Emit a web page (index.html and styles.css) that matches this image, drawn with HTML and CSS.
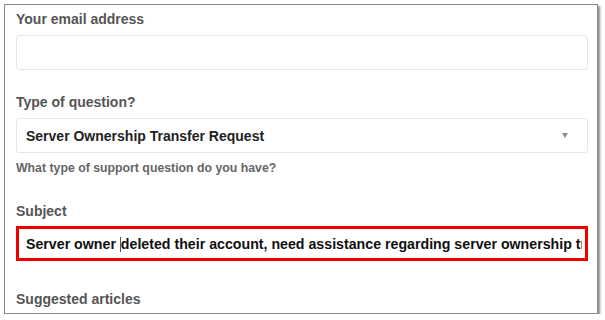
FILE: index.html
```html
<!DOCTYPE html>
<html>
<head>
<meta charset="utf-8">
<link rel="stylesheet" href="styles.css">
</head>
<body>
<div class="frame">
  <div class="field">
    <div class="label">Your email address</div>
    <div class="input"></div>
  </div>
  <div class="field field-hinted">
    <div class="label">Type of question?</div>
    <div class="input select">
      <span class="value">Server Ownership Transfer Request</span>
      <span class="arrow"></span>
    </div>
    <div class="hint">What type of support question do you have?</div>
  </div>
  <div class="field field-subject">
    <div class="label label-subject">Subject</div>
    <div class="input subject"><span class="value clip">Server owner <span class="caret"></span>deleted their account, need assistance regarding server ownership transfer</span></div>
  </div>
  <div class="field">
    <div class="label">Suggested articles</div>
  </div>
</div>
</body>
</html>
```
FILE: styles.css
```css
html, body {
  margin: 0;
  padding: 0;
  background: #ffffff;
}
body {
  padding: 4px 0 0 4px;
  font-family: "Liberation Sans", Arial, sans-serif;
}
.frame {
  box-sizing: border-box;
  width: 594px;
  height: 310px;
  border: 1px solid #8a8a8a;
  box-shadow: 2px 2px 2px rgba(0, 0, 0, 0.45);
  background: #fff;
  overflow: hidden;
  padding: 4px 9px 0 11px;
}
.label {
  font-size: 14px;
  line-height: 20px;
  font-weight: bold;
  color: #555555;
  margin-bottom: 6px;
}
.label-subject {
  margin-bottom: 5px;
}
.field {
  margin-bottom: 22px;
}
.field-hinted {
  margin-bottom: 25px;
}
.field-subject {
  margin-bottom: 28px;
}
.input {
  box-sizing: border-box;
  height: 35px;
  border: 1px solid #e6e6e6;
  border-radius: 3px;
  display: flex;
  align-items: center;
  padding: 0 9px;
}
.select {
  justify-content: space-between;
  margin-top: 1px;
}
.value {
  font-size: 14px;
  font-weight: bold;
  color: #222;
  white-space: nowrap;
}
.arrow {
  width: 0;
  height: 0;
  border-left: 3.5px solid transparent;
  border-right: 3.5px solid transparent;
  border-top: 5px solid #8a8a8a;
  margin-right: 10px;
}
.hint {
  font-size: 12.3px;
  line-height: 16px;
  font-weight: bold;
  color: #666;
  margin-top: 7px;
}
.subject {
  border: 3px solid #ee0000;
  border-radius: 0;
  padding: 0 3px 0 7px;
}
.clip {
  flex: 1;
  min-width: 0;
  overflow: hidden;
}
.subject .value {
  color: #111;
  font-size: 14.2px;
}
.caret {
  display: inline-block;
  width: 0;
  height: 15px;
  border-left: 1px solid #555;
  vertical-align: -3px;
}
```
